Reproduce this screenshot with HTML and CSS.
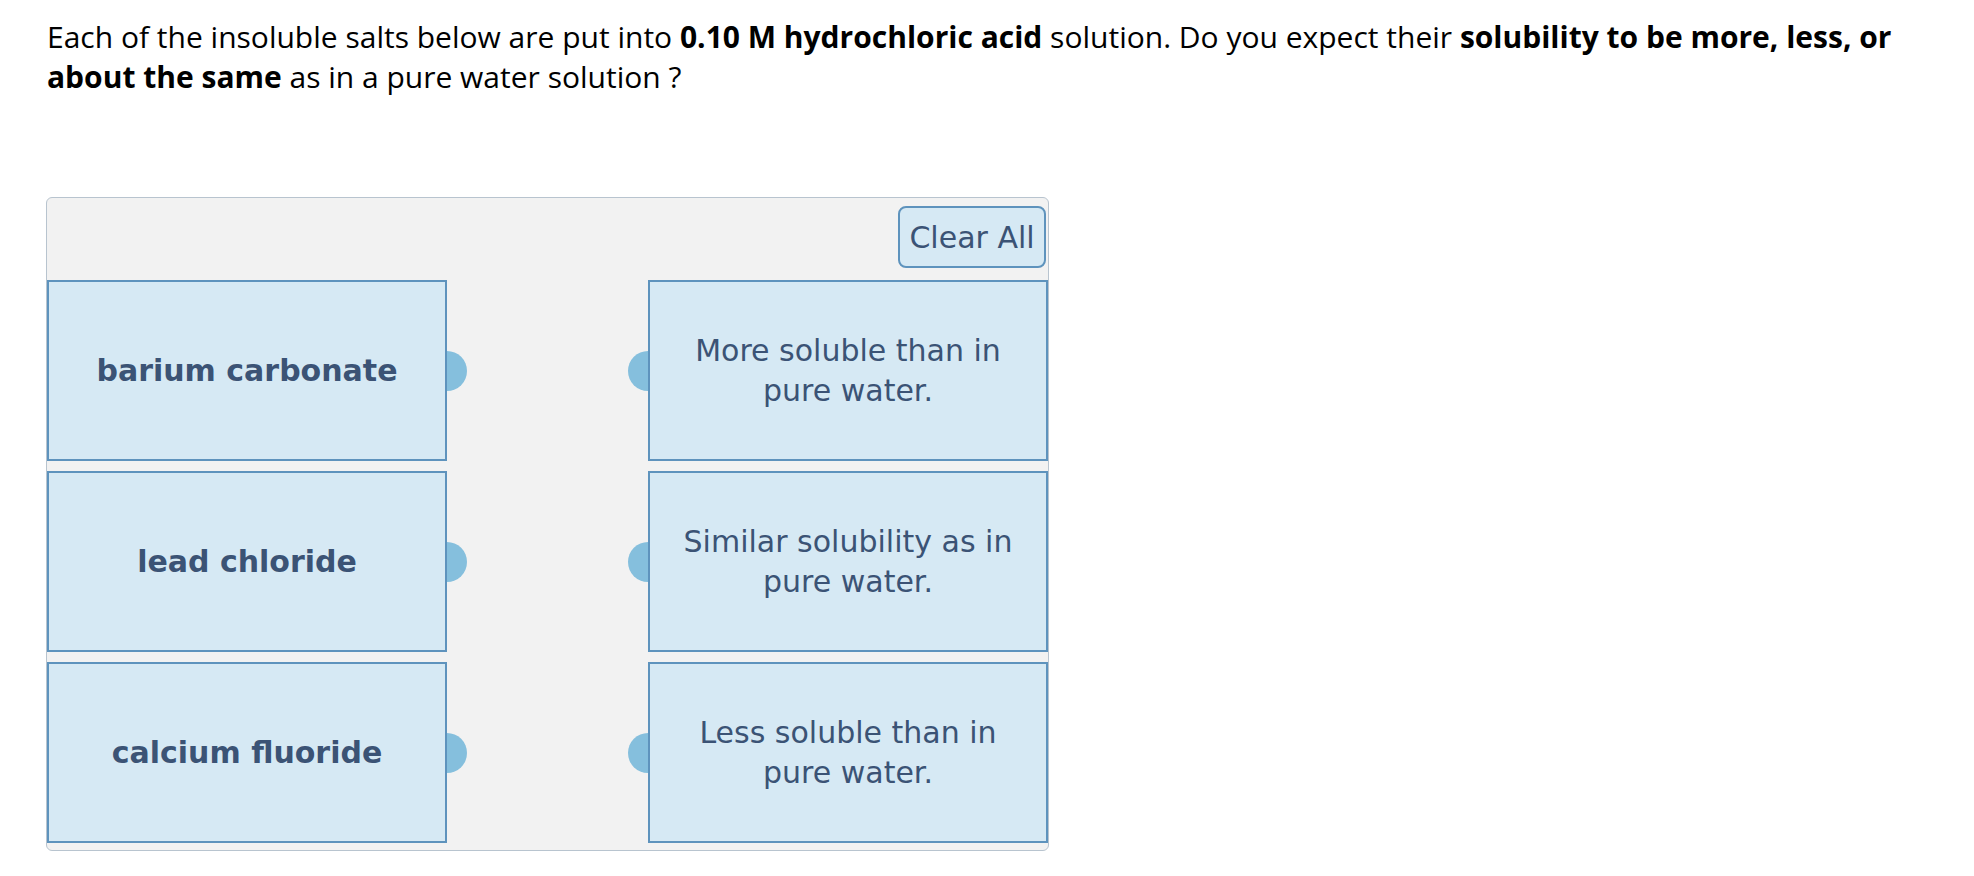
FILE: index.html
```html
<!DOCTYPE html>
<html>
<head>
<meta charset="utf-8">
<link rel="stylesheet" href="styles.css">
</head>
<body>
<div class="page">
  <p class="question">Each of the insoluble salts below are put into <b>0.10 M hydrochloric acid</b> solution. Do you expect their <b>solubility to be more, less, or about the same</b> as in a pure water solution ?</p>
  <div class="board">
    <div class="toolbar">
      <button class="clear">Clear All</button>
    </div>
    <div class="rows">
      <div class="row">
        <div class="item left"><span class="knob knob-right"></span><span class="label bold">barium carbonate</span></div>
        <div class="item right"><span class="knob knob-left"></span><span class="label">More soluble than in<br>pure water.</span></div>
      </div>
      <div class="row">
        <div class="item left"><span class="knob knob-right"></span><span class="label bold">lead chloride</span></div>
        <div class="item right"><span class="knob knob-left"></span><span class="label">Similar solubility as in<br>pure water.</span></div>
      </div>
      <div class="row">
        <div class="item left"><span class="knob knob-right"></span><span class="label bold">calcium fluoride</span></div>
        <div class="item right"><span class="knob knob-left"></span><span class="label">Less soluble than in<br>pure water.</span></div>
      </div>
    </div>
  </div>
</div>
</body>
</html>
```
FILE: styles.css
```css
html, body {
  margin: 0;
  padding: 0;
  background: #ffffff;
}

.page {
  padding: 17px 0 0 47px;
}

.question {
  margin: 0;
  width: 1880px;
  font-family: "Open Sans", "Liberation Sans", sans-serif;
  font-size: 30px;
  line-height: 40px;
  color: #000000;
}

.question b {
  font-weight: 700;
}

.board {
  margin-top: 100px;
  margin-left: -1px;
  width: 1001px;
  border: 1px solid #b8c4cf;
  border-radius: 6px;
  background: #f2f2f2;
  padding: 8px 0 7px 0;
}

.toolbar {
  display: flex;
  justify-content: flex-end;
  padding-right: 2px;
  margin-bottom: 12px;
}

.clear {
  width: 148px;
  height: 62px;
  border: 2px solid #5e93bd;
  border-radius: 8px;
  background: #d6e9f4;
  color: #3b5375;
  font-family: "DejaVu Sans", Verdana, sans-serif;
  font-size: 30px;
  padding: 0;
  cursor: pointer;
}

.rows {
  display: flex;
  flex-direction: column;
  gap: 10px;
}

.row {
  display: flex;
  justify-content: space-between;
}

.item {
  position: relative;
  width: 400px;
  height: 181px;
  box-sizing: border-box;
  display: flex;
  align-items: center;
  justify-content: center;
  text-align: center;
}

.label {
  position: relative;
  z-index: 2;
  font-family: "DejaVu Sans", Verdana, sans-serif;
  font-size: 30px;
  line-height: 40px;
  color: #3b5375;
}

.label.bold {
  font-weight: 700;
}

.item::before {
  content: "";
  position: absolute;
  inset: 0;
  background: #d6e9f4;
  border: 2px solid #5e93bd;
  z-index: 1;
}

.knob {
  position: absolute;
  top: 50%;
  width: 40px;
  height: 40px;
  margin-top: -20px;
  border-radius: 50%;
  background: #85bfdd;
  z-index: 0;
}

.knob-right {
  right: -20px;
}

.knob-left {
  left: -20px;
}
```
